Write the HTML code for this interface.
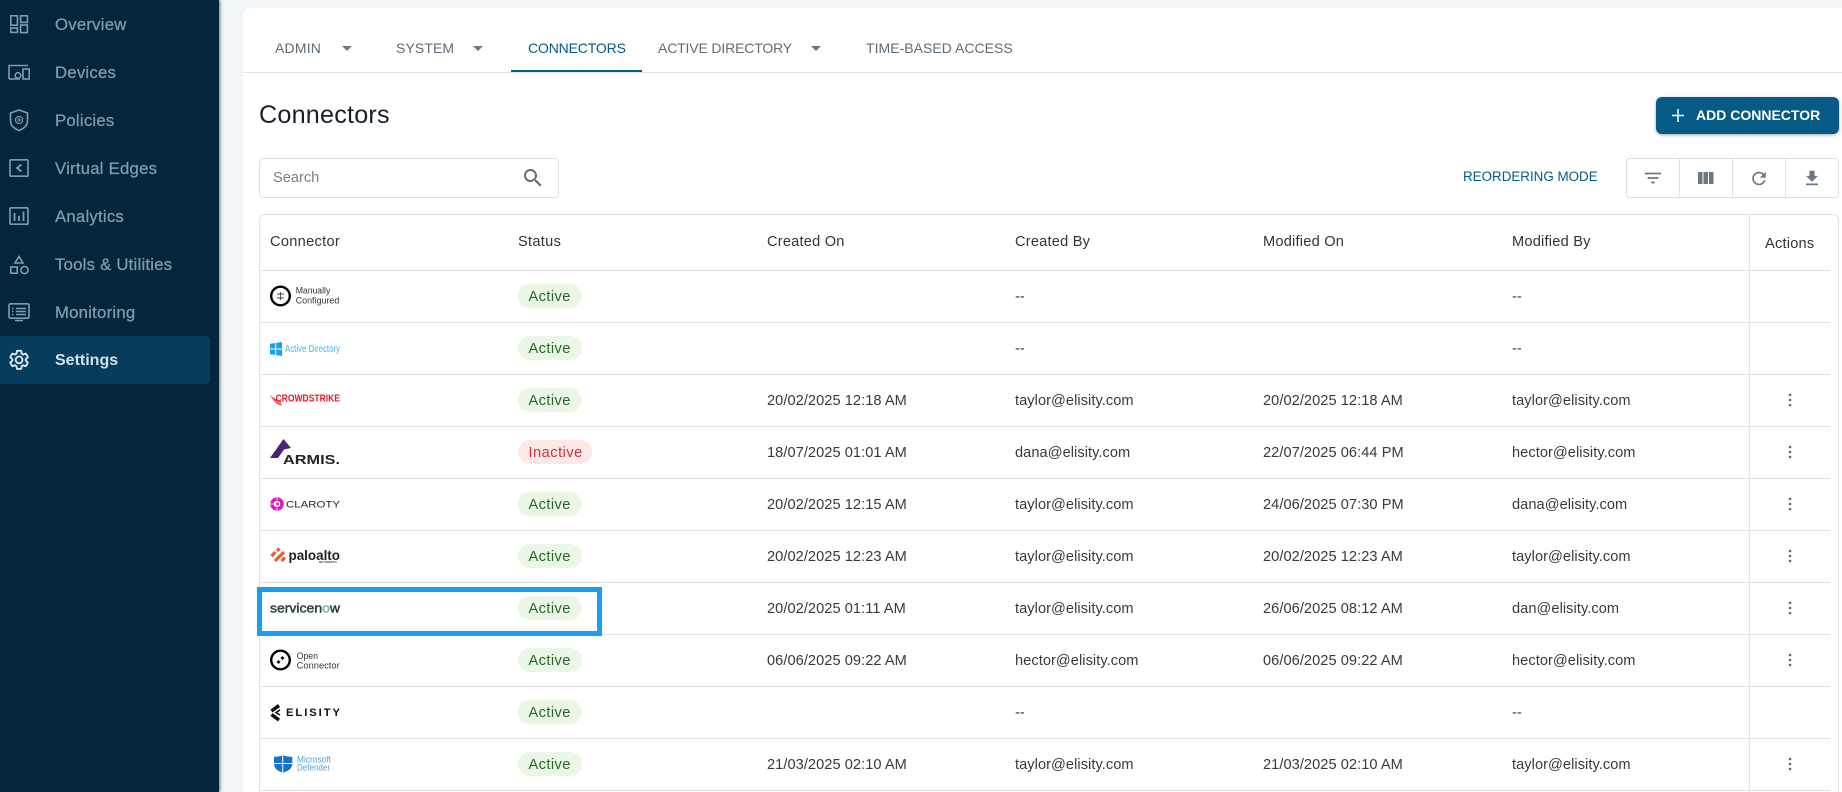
<!DOCTYPE html>
<html><head><meta charset="utf-8"><title>Connectors</title>
<style>
*{box-sizing:border-box}
html,body{margin:0;padding:0;width:1842px;height:792px;overflow:hidden;background:#f2f5f8;font-family:"Liberation Sans",sans-serif}
#root{position:relative;width:1842px;height:792px;overflow:hidden}
.a{position:absolute;white-space:nowrap}
#side{position:absolute;left:0;top:0;width:219px;height:792px;background:#03263b;box-shadow:1px 0 3px rgba(0,0,0,.55)}
.nav{position:absolute;left:55px;height:24px;line-height:24px;font-size:16.7px;letter-spacing:.25px;color:#7e9db3;-webkit-text-stroke:.25px #7e9db3;white-space:nowrap}
#card{position:absolute;left:243px;top:8px;width:1599px;height:784px;background:#fff;border-radius:8px 0 0 0}
.tab{position:absolute;top:38px;height:20px;line-height:20px;font-size:14px;color:#5f6b74;white-space:nowrap}
.h,.t{position:absolute;height:20px;line-height:20px;font-size:14.6px;white-space:nowrap}
.h{top:232px;color:#333;letter-spacing:.22px}
.t{color:#3a3a3a;letter-spacing:.06px;margin-top:1px}
.line{position:absolute;left:260px;width:1490px;height:1px;background:#e2e2e2}
.line2{position:absolute;left:1750px;width:80px;height:1px;background:#e2e2e2}
.b{position:absolute;left:518px;width:64px;height:24px;line-height:26px;border-radius:12px;background:#ebf6e6;color:#24672c;font-size:14.6px;letter-spacing:.43px;padding-left:10.5px;white-space:nowrap}
.b.i{width:74px;background:#fde7e7;color:#c5343a;letter-spacing:.5px}
svg{position:absolute;left:0;top:0;overflow:visible}
</style></head><body><div id="root">
<div id="side"></div>
<div style="position:absolute;left:0;top:336px;width:210px;height:48px;background:#063d5c;border-radius:0 4px 4px 0"></div>
<div class="nav" style="top:13px">Overview</div>
<div class="nav" style="top:61px">Devices</div>
<div class="nav" style="top:109px">Policies</div>
<div class="nav" style="top:157px">Virtual Edges</div>
<div class="nav" style="top:205px">Analytics</div>
<div class="nav" style="top:253px">Tools &amp; Utilities</div>
<div class="nav" style="top:301px">Monitoring</div>
<div class="nav" style="top:349px;font-size:16px;color:#d3e2ec;font-weight:bold;-webkit-text-stroke:0;letter-spacing:0">Settings</div>

<svg width="220" height="400" fill="none" stroke="#7e9db3" stroke-width="1.6">
<rect x="10.8" y="15.8" width="6.6" height="9.4"/><rect x="10.8" y="28" width="6.6" height="4.4"/><rect x="20.6" y="15.8" width="6.8" height="6.6"/><rect x="20.6" y="25" width="6.8" height="7.6"/>
<path d="M9 79V65.5h19M9 79h11"/><circle cx="18" cy="75.5" r="2.8"/><rect x="23" y="69" width="6.2" height="10"/>
<path d="M19 110l8.500 3v8c0 4.500-3.500 7.500-8.500 9.500-5-2-8.500-5-8.500-9.500v-8z"/><circle cx="19" cy="120" r="3.600" stroke-width="1.100"/><circle cx="19" cy="120" r="1.200" stroke-width=".9"/>
<rect x="10" y="159.800" width="18" height="16.400" rx="1"/><path d="M21.500 164.500l-4.500 3.500 4.500 3.500" stroke-width="1.900"/>
<rect x="10" y="207.800" width="18" height="16.400" rx="1"/><path d="M14.500 213v8M19 216v5M23.500 211.500v9.500" stroke-width="1.800"/>
<path d="M19 256.500l4 6.500h-8z"/><rect x="10.800" y="267" width="6.400" height="6.200"/><circle cx="24.500" cy="270" r="3.600"/>
<rect x="9" y="303.800" width="20" height="14.400" rx="1.500"/><path d="M15 320.500h8M12 308.500h1.500M16 308.500h10M12 311.500h1.500M16 311.500h10M12 314.500h1.500M16 314.500h10"/>
<g transform="translate(7.800,348.600) scale(.94)" stroke="#d9e6ee" stroke-width="2"><path d="M19.140 12.940c.04-.3.06-.61.06-.94 0-.32-.02-.64-.07-.94l2.030-1.580c.18-.14.23-.41.12-.61l-1.920-3.320c-.12-.22-.37-.29-.59-.22l-2.390.96c-.5-.38-1.030-.7-1.620-.94l-.36-2.540c-.04-.24-.24-.41-.48-.41h-3.840c-.24 0-.43.17-.47.41l-.36 2.540c-.59.24-1.130.57-1.620.94l-2.390-.96c-.22-.08-.47 0-.59.22L2.740 8.870c-.12.21-.08.47.12.61l2.030 1.580c-.05.3-.09.63-.09.94s.02.64.07.94l-2.030 1.580c-.18.14-.23.41-.12.61l1.920 3.320c.12.22.37.29.59.22l2.390-.96c.5.38 1.030.7 1.620.94l.36 2.540c.05.24.24.41.48.41h3.840c.24 0 .44-.17.47-.41l.36-2.540c.59-.24 1.130-.56 1.620-.94l2.390.96c.22.08.47 0 .59-.22l1.920-3.320c.12-.22.07-.47-.12-.61l-2.010-1.580z"/><circle cx="12" cy="12" r="3.600"/></g>
</svg>

<div id="card"></div>
<div style="position:absolute;left:243px;top:72px;width:1599px;height:1px;background:#e2e5e8"></div>
<div class="tab" style="left:275px;letter-spacing:.2px">ADMIN</div>
<div class="tab" style="left:396px;letter-spacing:.1px">SYSTEM</div>
<div class="tab" style="left:528px;color:#055a86;letter-spacing:-.15px">CONNECTORS</div>
<div class="tab" style="left:658px;letter-spacing:-.15px">ACTIVE DIRECTORY</div>
<div class="tab" style="left:866px;letter-spacing:.03px">TIME-BASED ACCESS</div>
<div style="position:absolute;left:511px;top:70px;width:131px;height:2px;background:#055a86"></div>
<svg width="900" height="80" fill="#6d7780"><path d="M342 46h10l-5 5zM473 46h10l-5 5zM811 46h10l-5 5z"/></svg>

<div class="a" style="left:259px;top:100px;height:30px;line-height:30px;font-size:25.2px;letter-spacing:.2px;color:#17202a">Connectors</div>
<div style="position:absolute;left:259px;top:158px;width:300px;height:40px;border:1px solid #dcdfe2;border-radius:4px;background:#fff"></div>
<div class="a" style="left:273px;top:168px;line-height:20px;font-size:14.6px;color:#7a7f85">Search</div>
<svg width="600" height="200"><g transform="translate(521,166)"><path fill="#6b6b6b" d="M15.500 14h-.79l-.28-.27C15.410 12.590 16 11.110 16 9.500 16 5.910 13.090 3 9.500 3S3 5.910 3 9.500 5.910 16 9.500 16c1.610 0 3.090-.59 4.230-1.570l.27.28v.79l5 4.990L20.490 19l-4.990-5zm-6 0C7.010 14 5 11.990 5 9.500S7.010 5 9.500 5 14 7.010 14 9.500 11.990 14 9.500 14z"/></g></svg>

<div style="position:absolute;left:1656px;top:97px;width:183px;height:37px;background:#055a86;border-radius:6px;box-shadow:0 1px 3px rgba(0,0,0,.35)"></div>
<svg width="1842" height="200"><path d="M1678 109v13M1672 115.500h12" stroke="#fff" stroke-width="1.500" fill="none"/></svg>
<div class="a" style="left:1696px;top:105px;line-height:20px;font-size:14px;font-weight:bold;color:#fff">ADD CONNECTOR</div>
<div class="a" style="left:1463px;top:167px;line-height:20px;font-size:13.400px;color:#055a86">REORDERING MODE</div>
<div style="position:absolute;left:1626px;top:158px;width:213px;height:40px;border:1px solid #dcdfe2;border-radius:4px"></div>
<svg width="1842" height="200">
<path d="M1679.500 158v40M1732.500 158v40M1785.500 158v40" stroke="#dcdfe2"/>
<g fill="#6c7685">
<g transform="translate(1642.200,167.200) scale(.9)"><path d="M10 18h4v-2h-4v2zM3 6v2h18V6H3zm3 7h12v-2H6v2z"/></g>
<path d="M1698 172h4.500v12h-4.500zM1703.500 172h4.500v12h-4.500zM1709 172h4.500v12H1709z"/>
<g transform="translate(1748.800,168.300) scale(.85)"><path d="M17.650 6.350C16.200 4.900 14.210 4 12 4c-4.420 0-7.990 3.580-7.990 8s3.570 8 7.990 8c3.730 0 6.840-2.550 7.730-6h-2.080c-.82 2.330-3.040 4-5.650 4-3.310 0-6-2.690-6-6s2.690-6 6-6c1.660 0 3.140.69 4.220 1.780L13 11h7V4l-2.350 2.350z"/></g>
<g transform="translate(1801.800,168.200) scale(.85)"><path d="M19 9h-4V3H9v6H5l7 7 7-7zM5 18v2h14v-2H5z"/></g>
</g></svg>

<div style="position:absolute;left:259px;top:214px;width:1580px;height:578px;border:1px solid #e2e2e2;border-bottom:0;border-radius:6px 6px 0 0"></div>
<div style="position:absolute;left:1749px;top:214px;width:1px;height:578px;background:#e4e4e4;box-shadow:-1px 0 2px rgba(0,0,0,.08)"></div>
<div class="h" style="left:270px;letter-spacing:.3px">Connector</div>
<div class="h" style="left:518px;letter-spacing:.3px">Status</div>
<div class="h" style="left:767px">Created On</div>
<div class="h" style="left:1015px">Created By</div>
<div class="h" style="left:1263px">Modified On</div>
<div class="h" style="left:1512px">Modified By</div>
<div class="h" style="left:1765px;top:234px">Actions</div>

<div class="line" style="top:270px"></div><div class="line2" style="top:270px"></div>
<div class="line" style="top:322px"></div><div class="line2" style="top:322px"></div>
<div class="line" style="top:374px"></div><div class="line2" style="top:374px"></div>
<div class="line" style="top:426px"></div><div class="line2" style="top:426px"></div>
<div class="line" style="top:478px"></div><div class="line2" style="top:478px"></div>
<div class="line" style="top:530px"></div><div class="line2" style="top:530px"></div>
<div class="line" style="top:582px"></div><div class="line2" style="top:582px"></div>
<div class="line" style="top:634px"></div><div class="line2" style="top:634px"></div>
<div class="line" style="top:686px"></div><div class="line2" style="top:686px"></div>
<div class="line" style="top:738px"></div><div class="line2" style="top:738px"></div>
<div class="line" style="top:790px"></div><div class="line2" style="top:790px"></div>

<div class="b" style="top:284px">Active</div>
<div class="t" style="left:1015px;top:286px">--</div><div class="t" style="left:1512px;top:286px">--</div>

<div class="b" style="top:336px">Active</div>
<div class="t" style="left:1015px;top:338px">--</div><div class="t" style="left:1512px;top:338px">--</div>

<div class="b" style="top:388px">Active</div>
<div class="t" style="left:767px;top:390px">20/02/2025 12:18 AM</div><div class="t" style="left:1015px;top:390px">taylor@elisity.com</div><div class="t" style="left:1263px;top:390px">20/02/2025 12:18 AM</div><div class="t" style="left:1512px;top:390px">taylor@elisity.com</div>

<div class="b i" style="top:440px">Inactive</div>
<div class="t" style="left:767px;top:442px">18/07/2025 01:01 AM</div><div class="t" style="left:1015px;top:442px">dana@elisity.com</div><div class="t" style="left:1263px;top:442px">22/07/2025 06:44 PM</div><div class="t" style="left:1512px;top:442px">hector@elisity.com</div>

<div class="b" style="top:492px">Active</div>
<div class="t" style="left:767px;top:494px">20/02/2025 12:15 AM</div><div class="t" style="left:1015px;top:494px">taylor@elisity.com</div><div class="t" style="left:1263px;top:494px">24/06/2025 07:30 PM</div><div class="t" style="left:1512px;top:494px">dana@elisity.com</div>

<div class="b" style="top:544px">Active</div>
<div class="t" style="left:767px;top:546px">20/02/2025 12:23 AM</div><div class="t" style="left:1015px;top:546px">taylor@elisity.com</div><div class="t" style="left:1263px;top:546px">20/02/2025 12:23 AM</div><div class="t" style="left:1512px;top:546px">taylor@elisity.com</div>

<div class="b" style="top:596px">Active</div>
<div class="t" style="left:767px;top:598px">20/02/2025 01:11 AM</div><div class="t" style="left:1015px;top:598px">taylor@elisity.com</div><div class="t" style="left:1263px;top:598px">26/06/2025 08:12 AM</div><div class="t" style="left:1512px;top:598px">dan@elisity.com</div>

<div class="b" style="top:648px">Active</div>
<div class="t" style="left:767px;top:650px">06/06/2025 09:22 AM</div><div class="t" style="left:1015px;top:650px">hector@elisity.com</div><div class="t" style="left:1263px;top:650px">06/06/2025 09:22 AM</div><div class="t" style="left:1512px;top:650px">hector@elisity.com</div>

<div class="b" style="top:700px">Active</div>
<div class="t" style="left:1015px;top:702px">--</div><div class="t" style="left:1512px;top:702px">--</div>

<div class="b" style="top:752px">Active</div>
<div class="t" style="left:767px;top:754px">21/03/2025 02:10 AM</div><div class="t" style="left:1015px;top:754px">taylor@elisity.com</div><div class="t" style="left:1263px;top:754px">21/03/2025 02:10 AM</div><div class="t" style="left:1512px;top:754px">taylor@elisity.com</div>

<svg width="1842" height="792" fill="#666">
<circle cx="1790" cy="395" r="1.300"/><circle cx="1790" cy="400" r="1.300"/><circle cx="1790" cy="405" r="1.300"/>
<circle cx="1790" cy="447" r="1.300"/><circle cx="1790" cy="452" r="1.300"/><circle cx="1790" cy="457" r="1.300"/>
<circle cx="1790" cy="499" r="1.300"/><circle cx="1790" cy="504" r="1.300"/><circle cx="1790" cy="509" r="1.300"/>
<circle cx="1790" cy="551" r="1.300"/><circle cx="1790" cy="556" r="1.300"/><circle cx="1790" cy="561" r="1.300"/>
<circle cx="1790" cy="603" r="1.300"/><circle cx="1790" cy="608" r="1.300"/><circle cx="1790" cy="613" r="1.300"/>
<circle cx="1790" cy="655" r="1.300"/><circle cx="1790" cy="660" r="1.300"/><circle cx="1790" cy="665" r="1.300"/>
<circle cx="1790" cy="759" r="1.300"/><circle cx="1790" cy="764" r="1.300"/><circle cx="1790" cy="769" r="1.300"/>
</svg>

<svg width="1842" height="792" font-family="'Liberation Sans',sans-serif">
<!-- Manually Configured -->
<circle cx="280.500" cy="296" r="9.300" fill="none" stroke="#000" stroke-width="2.400"/>
<path d="M277 294h7M277 298h7M280.500 292v8" stroke="#444" stroke-width=".9" fill="none"/>
<text x="295.700" y="293.300" font-size="9.500" textLength="34.600" lengthAdjust="spacingAndGlyphs" fill="#333">Manually</text>
<text x="295.700" y="303.700" font-size="9.500" textLength="43.600" lengthAdjust="spacingAndGlyphs" fill="#333">Configured</text>
<!-- Active Directory -->
<path d="M270 343.800l5.300-.8v5.500H270zM276.200 342.900l5.800-.9v6.500h-5.800zM270 349.500h5.300v5.400l-5.300-.7zM276.200 349.500h5.800v6.500l-5.800-.9z" fill="#19a3ee"/>
<text x="285" y="352" font-size="10.500" textLength="55" lengthAdjust="spacingAndGlyphs" fill="#46b4ea">Active Directory</text>
<!-- Crowdstrike -->
<path d="M270 394.500c3 3.500 7 5.500 12 7l-1.500 1.200c-5-1.200-9-3.700-10.500-8.200zM272 398.500c2.500 2 5.500 4 10 5.500l-.5 1.500c-4-1-7-3-9.500-7z" fill="#f2434a"/>
<text x="275.500" y="401.700" font-size="9.700" font-weight="bold" textLength="64.500" lengthAdjust="spacingAndGlyphs" fill="#f0131e">CROWDSTRIKE</text>
<!-- Armis -->
<path d="M270 458l13.500-19 7.500 9-7 1.500-6 8.500z" fill="#4a2276"/>
<text x="283" y="464" font-size="12.500" font-weight="bold" textLength="57" lengthAdjust="spacingAndGlyphs" fill="#26242a">ARMIS.</text>
<!-- Claroty -->
<circle cx="277" cy="504" r="5" fill="none" stroke="#e01ac0" stroke-width="3.600"/>
<path d="M270 504h4M277 497v3M277 508v3" stroke="#fff" stroke-width=".8"/>
<circle cx="277.500" cy="504" r="1.500" fill="#e01ac0"/>
<text x="286" y="507.300" font-size="9.200" textLength="54" lengthAdjust="spacingAndGlyphs" fill="#222">CLAROTY</text>
<!-- Palo Alto -->
<g stroke="#f4592d" stroke-width="3.200" fill="none"><path d="M271.500 556l4-4M275 561l9-9M281.500 561l3.500-3.500M277 551l2.500-2.500"/></g>
<text x="288.500" y="560" font-size="13.500" font-weight="bold" textLength="51.500" lengthAdjust="spacingAndGlyphs" fill="#222">paloalto</text>
<text x="319" y="563" font-size="2.800" font-weight="bold" letter-spacing=".2" fill="#333">NETWORKS</text>
<!-- ServiceNow -->
<text x="270" y="612.500" font-size="13" textLength="70" lengthAdjust="spacingAndGlyphs" fill="#2c3e40" stroke="#2c3e40" stroke-width=".45">servicen<tspan fill="#7bb8a5" stroke="#7bb8a5">o</tspan>w</text>
<!-- Open Connector -->
<circle cx="280.500" cy="660" r="9.300" fill="none" stroke="#000" stroke-width="2.400"/>
<path d="M277.500 663l2-2M281.500 659l2-2" stroke="#111" stroke-width="3"/>
<text x="296.700" y="659" font-size="9.200" textLength="21.300" lengthAdjust="spacingAndGlyphs" fill="#333">Open</text>
<text x="296.700" y="668.700" font-size="9.200" textLength="43" lengthAdjust="spacingAndGlyphs" fill="#333">Connector</text>
<!-- Elisity -->
<path d="M279 705.500l-7.500 5.500M271.500 714.500l7.500 5.500" stroke="#0b0b0b" stroke-width="3.500" fill="none"/>
<path d="M280 710l-4 2.500 4 2.500" stroke="#0b0b0b" stroke-width="1.500" fill="none"/>
<text x="286" y="716" font-size="11.200" font-weight="bold" textLength="54" fill="#111">ELISITY</text>
<!-- Defender -->
<path d="M283 755c2.500 1.300 5.500 1.800 9.300 1.800v7c0 4.700-3.700 7.200-9.300 9-5.600-1.800-9-4.300-9-9v-7c3.500 0 6.500-.5 9-1.800z" fill="#1673c9"/>
<path d="M282.700 755v18M274 763.500h18" stroke="#fff" stroke-width="1"/>
<text x="297" y="762.500" font-size="9.500" textLength="34" lengthAdjust="spacingAndGlyphs" fill="#52a3e0">Microsoft</text>
<text x="297" y="770.700" font-size="9.500" textLength="33" lengthAdjust="spacingAndGlyphs" fill="#52a3e0">Defender</text>
</svg>

<div style="position:absolute;left:257px;top:587px;width:345px;height:49px;border:5px solid #1a9ff0"></div>
</div></body></html>
